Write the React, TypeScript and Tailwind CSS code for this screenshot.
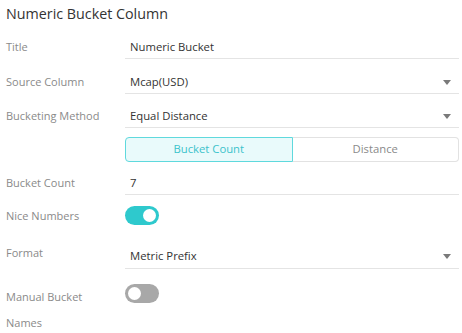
import React from "react";

const font = { fontFamily: '"Open Sans", "Noto Sans", sans-serif' };

function Caret() {
  return (
    <svg width="8" height="5" viewBox="0 0 8 5" className="mr-[8px] shrink-0">
      <path d="M0 0 H8 L4 5 Z" fill="#7a7a7a" />
    </svg>
  );
}

function Field({ label, value, select }: { label: string; value: string; select?: boolean }) {
  return (
    <div className="flex h-[25px] items-center">
      <div className="w-[119px] shrink-0 pt-[2px] text-[11px] text-[#8a8a8a]">{label}</div>
      <div className="flex h-full flex-1 items-center justify-between border-b border-[#e4e4e4] pl-[5px] pt-[2px]">
        <span className="text-[11.3px] text-[#333]">{value}</span>
        {select && <Caret />}
      </div>
    </div>
  );
}

function Toggle({ on }: { on: boolean }) {
  return (
    <div
      className={`flex h-[19px] w-[34px] items-center rounded-full px-[3px] ${
        on ? "justify-end bg-[#2ec9cd]" : "justify-start bg-[#a8a8a8]"
      }`}
    >
      <div className="h-[13px] w-[13px] rounded-full bg-white" />
    </div>
  );
}

export default function App() {
  return (
    <div className="h-[333px] w-[462px] bg-white pl-[6px] pr-[3px]" style={font}>
      <div className="pt-[3px] text-[14.3px] leading-[21px] text-[#333]">Numeric Bucket Column</div>

      <div className="mt-[10px]">
        <Field label="Title" value="Numeric Bucket" />
      </div>
      <div className="mt-[10px]">
        <Field label="Source Column" value="Mcap(USD)" select />
      </div>
      <div className="mt-[9px]">
        <Field label="Bucketing Method" value="Equal Distance" select />
      </div>

      <div className="mt-[9px] flex h-[25px]">
        <div className="w-[119px] shrink-0" />
        <div className="flex flex-1 text-[11.3px]">
          <div className="flex flex-1 items-center justify-center rounded-l-[4px] border border-[#5fd9dd] bg-[#e9fafb] text-[#3cc3cb]">
            Bucket Count
          </div>
          <div className="flex flex-1 items-center justify-center rounded-r-[4px] border border-l-0 border-[#e2e2e2] text-[#8a8a8a]">
            Distance
          </div>
        </div>
      </div>

      <div className="mt-[8px]">
        <Field label="Bucket Count" value="7" />
      </div>

      <div className="mt-[8px] flex h-[25px] items-center">
        <div className="w-[119px] shrink-0 pt-[2px] text-[11px] text-[#8a8a8a]">Nice Numbers</div>
        <Toggle on />
      </div>

      <div className="mt-[16px] flex h-[25px] items-start">
        <div className="w-[119px] shrink-0 pt-[1px] text-[11px] leading-[16px] text-[#8a8a8a]">Format</div>
        <div className="flex h-full flex-1 items-center justify-between border-b border-[#e4e4e4] pl-[5px] pt-[1px]">
          <span className="text-[11.3px] text-[#333]">Metric Prefix</span>
          <Caret />
        </div>
      </div>

      <div className="mt-[14px] flex items-start">
        <div className="w-[119px] shrink-0 pt-[1px] text-[11px] leading-[26px] text-[#8a8a8a]">
          Manual Bucket
          <br />
          Names
        </div>
        <div className="mt-[1px]">
          <Toggle on={false} />
        </div>
      </div>
    </div>
  );
}
